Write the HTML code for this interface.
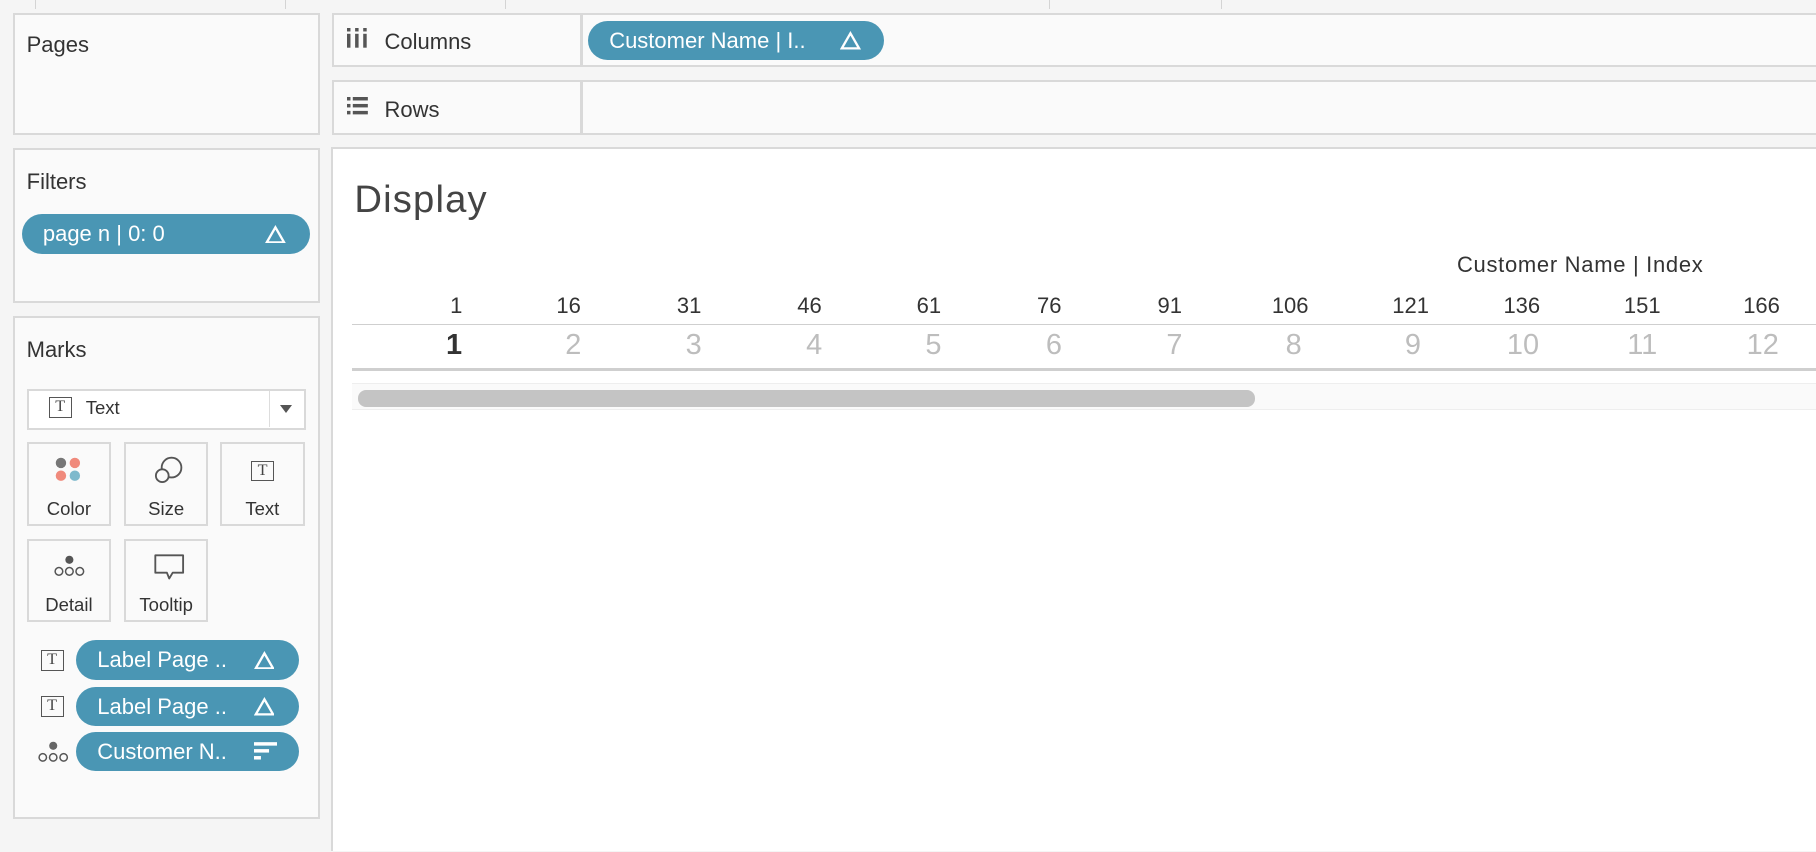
<!DOCTYPE html>
<html><head><meta charset="utf-8"><style>
html,body{margin:0;padding:0;width:1816px;height:852px;overflow:hidden;background:#f5f5f5}
#w{position:absolute;left:0;top:0;width:1568px;height:735px;overflow:hidden;zoom:1.15816;font-family:"Liberation Sans",sans-serif;color:#333}
.a{position:absolute}
.box{position:absolute;background:#fafafa;border:2px solid #d9d9d9;box-sizing:border-box}
.pill{position:absolute;background:#4a96b4;color:#fff;border-radius:18px;font-size:19px;box-sizing:border-box;line-height:34px;padding-left:18px;white-space:nowrap}
.tri{position:absolute}
.t{position:absolute;font-size:19px;white-space:nowrap}
.btn{position:absolute;width:73px;height:72px;border:2px solid #d9d9d9;box-sizing:border-box;background:#fafafa;text-align:center;font-size:16px}
.btn span{position:absolute;left:0;right:0;top:46px}
.h{position:absolute;top:253px;font-size:19px;width:60px;text-align:center;color:#333;font-weight:500}
.v{position:absolute;top:284px;font-size:25px;width:60px;text-align:center;color:#bdbdbd}
.ti{position:absolute;width:20px;height:18px;border:1.5px solid #555;box-sizing:border-box;font-family:"Liberation Serif",serif;font-size:14px;line-height:15px;text-align:center;color:#444}
</style></head><body><div id="w">
<div class="a" style="left:30px;top:0;width:1px;height:8px;background:#d4d4d4"></div>
<div class="a" style="left:246px;top:0;width:1px;height:8px;background:#d4d4d4"></div>
<div class="a" style="left:436px;top:0;width:1px;height:8px;background:#d4d4d4"></div>
<div class="a" style="left:906px;top:0;width:1px;height:8px;background:#d4d4d4"></div>
<div class="a" style="left:1054px;top:0;width:1px;height:8px;background:#d4d4d4"></div>

<div class="box" style="left:11px;top:11px;width:265px;height:106px"></div>
<div class="t" style="left:23px;top:28px">Pages</div>
<div class="box" style="left:11px;top:128px;width:265px;height:134px"></div>
<div class="t" style="left:23px;top:146px">Filters</div>
<div class="pill" style="left:19px;top:185px;width:249px">page n | 0: 0</div>
<svg class="tri" style="left:229px;top:194px" width="18" height="16"><path d="M9 2L16.5 15H1.5Z" fill="none" stroke="#fff" stroke-width="2"/></svg>
<div class="box" style="left:11px;top:273px;width:265px;height:434px"></div>
<div class="t" style="left:23px;top:291px">Marks</div>
<div class="a" style="left:23px;top:336px;width:241px;height:35px;border:2px solid #d9d9d9;box-sizing:border-box;background:#fff"></div>
<div class="a" style="left:232px;top:338px;width:1px;height:31px;background:#ddd"></div>
<div class="ti" style="left:42px;top:343px">T</div>
<div class="t" style="left:74px;top:343px;font-size:16px">Text</div>
<div class="a" style="left:242px;top:350px;width:0;height:0;border-left:6px solid transparent;border-right:6px solid transparent;border-top:7px solid #555"></div>

<div class="btn" style="left:23px;top:382px"><svg class="a" style="left:22px;top:10px" width="26" height="26"><circle cx="6" cy="6" r="4.5" fill="#777"/><circle cx="18" cy="6" r="4.5" fill="#f08a7c"/><circle cx="6" cy="17" r="4.5" fill="#f08a7c"/><circle cx="18" cy="17" r="4.5" fill="#7eb9cc"/></svg><span>Color</span></div>
<div class="btn" style="left:107px;top:382px"><svg class="a" style="left:23px;top:10px" width="28" height="26"><circle cx="16" cy="10" r="8.5" fill="none" stroke="#555" stroke-width="1.6"/><circle cx="8" cy="17" r="5.5" fill="#fafafa" stroke="#555" stroke-width="1.6"/></svg><span>Size</span></div>
<div class="btn" style="left:190px;top:382px"><div class="ti" style="left:25px;top:14px">T</div><span>Text</span></div>
<div class="btn" style="left:23px;top:465px"><svg class="a" style="left:20px;top:12px" width="32" height="22"><circle cx="15" cy="5" r="3.5" fill="#555"/><circle cx="6" cy="15" r="3.3" fill="none" stroke="#555" stroke-width="1.3"/><circle cx="15" cy="15" r="3.3" fill="none" stroke="#555" stroke-width="1.3"/><circle cx="24" cy="15" r="3.3" fill="none" stroke="#555" stroke-width="1.3"/></svg><span>Detail</span></div>
<div class="btn" style="left:107px;top:465px"><svg class="a" style="left:23px;top:11px" width="28" height="26"><path d="M2 2H26V17H17L14 22L12 17H2Z" fill="none" stroke="#555" stroke-width="1.6" stroke-linejoin="round"/></svg><span>Tooltip</span></div>

<div class="ti" style="left:35px;top:561px">T</div>
<div class="pill" style="left:66px;top:553px;width:192px">Label Page ..</div>
<svg class="tri" style="left:219px;top:562px" width="18" height="16"><path d="M9 2L16.5 15H1.5Z" fill="none" stroke="#fff" stroke-width="2"/></svg>
<div class="ti" style="left:35px;top:601px">T</div>
<div class="pill" style="left:66px;top:593px;width:192px">Label Page ..</div>
<svg class="tri" style="left:219px;top:602px" width="18" height="16"><path d="M9 2L16.5 15H1.5Z" fill="none" stroke="#fff" stroke-width="2"/></svg>
<svg class="a" style="left:32px;top:639px" width="30" height="22"><circle cx="14" cy="5" r="3.5" fill="#666"/><circle cx="5" cy="15" r="3.2" fill="none" stroke="#555" stroke-width="1.3"/><circle cx="14" cy="15" r="3.2" fill="none" stroke="#555" stroke-width="1.3"/><circle cx="23" cy="15" r="3.2" fill="none" stroke="#555" stroke-width="1.3"/></svg>
<div class="pill" style="left:66px;top:632px;width:192px">Customer N..</div>
<svg class="a" style="left:219px;top:640px" width="20" height="18"><rect x="0" y="1" width="20" height="3" fill="#fff"/><rect x="0" y="7" width="13" height="3" fill="#fff"/><rect x="0" y="13" width="6" height="3" fill="#fff"/></svg>

<div class="box" style="left:287px;top:11px;width:1290px;height:47px"></div>
<div class="a" style="left:501px;top:11px;width:2px;height:47px;background:#d9d9d9"></div>
<svg class="a" style="left:300px;top:24px" width="20" height="20"><rect x="0" y="0" width="3" height="3" fill="#555"/><rect x="7" y="0" width="3" height="3" fill="#555"/><rect x="14" y="0" width="3" height="3" fill="#555"/><rect x="0" y="5" width="3" height="12" fill="#555"/><rect x="7" y="5" width="3" height="12" fill="#555"/><rect x="14" y="5" width="3" height="12" fill="#555"/></svg>
<div class="t" style="left:332px;top:25px">Columns</div>
<div class="pill" style="left:508px;top:18px;width:255px">Customer Name | I..</div>
<svg class="tri" style="left:725px;top:27px" width="18" height="16"><path d="M9 2L16.5 15H1.5Z" fill="none" stroke="#fff" stroke-width="2"/></svg>

<div class="box" style="left:287px;top:69px;width:1290px;height:48px"></div>
<div class="a" style="left:501px;top:69px;width:2px;height:48px;background:#d9d9d9"></div>
<svg class="a" style="left:300px;top:84px" width="20" height="18"><rect x="0" y="0" width="3" height="3" fill="#555"/><rect x="5" y="0" width="13" height="3" fill="#555"/><rect x="0" y="6" width="3" height="3" fill="#555"/><rect x="5" y="6" width="13" height="3" fill="#555"/><rect x="0" y="12" width="3" height="3" fill="#555"/><rect x="5" y="12" width="13" height="3" fill="#555"/></svg>
<div class="t" style="left:332px;top:84px">Rows</div>

<div class="a" style="left:286px;top:127px;width:1290px;height:620px;background:#fff;border:2px solid #d9d9d9;border-bottom:none;box-sizing:border-box"></div>
<div class="t" style="left:306px;top:154px;font-size:33px;color:#444;letter-spacing:1px">Display</div>
<div class="t" style="left:1258px;top:218px;font-size:19px;color:#333;letter-spacing:0.6px">Customer Name | Index</div>

<div class="h" style="left:364px">1</div><div class="h" style="left:461px">16</div><div class="h" style="left:565px">31</div><div class="h" style="left:669px">46</div><div class="h" style="left:772px">61</div><div class="h" style="left:876px">76</div><div class="h" style="left:980px">91</div><div class="h" style="left:1084px">106</div><div class="h" style="left:1188px">121</div><div class="h" style="left:1284px">136</div><div class="h" style="left:1388px">151</div><div class="h" style="left:1491px">166</div>
<div class="a" style="left:304px;top:280px;width:1264px;height:1px;background:#cfcfcf"></div>
<div class="v" style="left:362px;color:#333;font-weight:bold">1</div><div class="v" style="left:465px">2</div><div class="v" style="left:569px">3</div><div class="v" style="left:673px">4</div><div class="v" style="left:776px">5</div><div class="v" style="left:880px">6</div><div class="v" style="left:984px">7</div><div class="v" style="left:1087px">8</div><div class="v" style="left:1190px">9</div><div class="v" style="left:1285px">10</div><div class="v" style="left:1388px">11</div><div class="v" style="left:1492px">12</div>
<div class="a" style="left:304px;top:318px;width:1264px;height:2px;background:#cfcfcf"></div>
<div class="a" style="left:304px;top:331px;width:1264px;height:23px;background:#fafafa;border-top:1px solid #eee;border-bottom:1px solid #eee;box-sizing:border-box"></div>
<div class="a" style="left:309px;top:337px;width:775px;height:14px;background:#c4c4c4;border-radius:7px"></div>
</div></body></html>
